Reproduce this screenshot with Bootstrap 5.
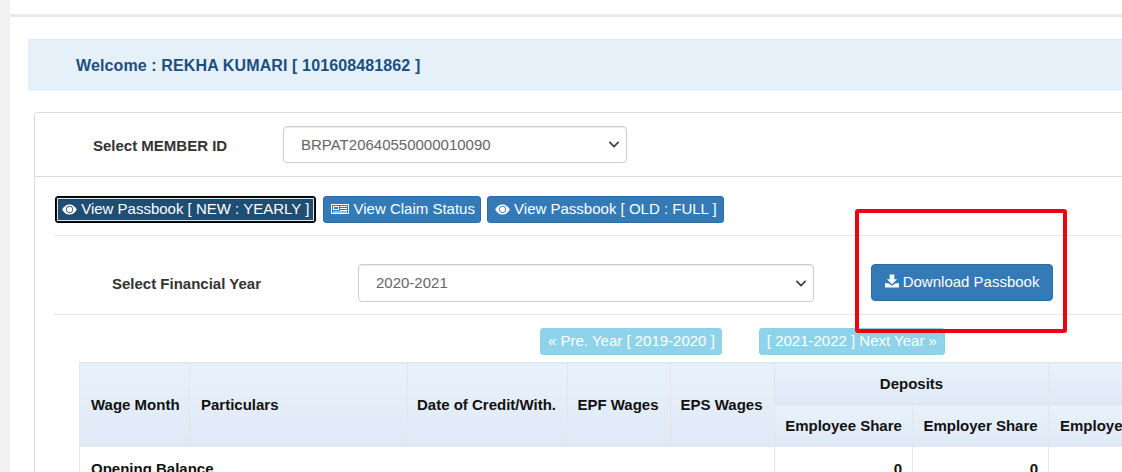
<!DOCTYPE html>
<html lang="en">
<head>
<meta charset="utf-8">
<title>Passbook</title>
<link rel="stylesheet" href="https://cdn.jsdelivr.net/npm/bootstrap@5.3.0/dist/css/bootstrap.min.css">
<style>
html,body{height:472px;overflow:hidden;background:#fff}
body{font-family:"Liberation Sans",Arial,sans-serif;font-size:15px;color:#333;position:relative}
.page-shell{margin-left:9px;width:1500px;border-left:1px solid #eee;min-height:472px}
.side-shade{position:absolute;left:0;top:0;width:9px;height:472px;background:#f1f1f1}
.top-rule{height:17px;border-bottom:3px solid #e9e9e9}
.welcome-band{margin:22px 0 0 18px;height:52px;background:#e5f0f8;border-top:1px solid #dfeaf2;padding-left:48px;font-size:16px;font-weight:700;color:#1c4f80;line-height:51px;letter-spacing:.12px}
.main-panel{margin:21px 0 0 24px;border:1px solid #ddd;border-radius:3px 0 0 0}
.member-row{height:64px;border-bottom:1px solid #ddd;padding-left:58px}
.member-label{width:190px;font-weight:700;color:#333;padding-top:4px}
.member-select,.year-select{height:37px;border:1px solid #ccc;border-radius:4px;color:#666;font-size:15px;font-family:"Liberation Sans",Arial,sans-serif;padding:1px 30px 0 17px;box-shadow:inset 0 1px 1px rgba(0,0,0,.075);background-image:url("data:image/svg+xml,%3csvg xmlns='http://www.w3.org/2000/svg' viewBox='0 0 16 16'%3e%3cpath fill='none' stroke='%23444' stroke-linecap='round' stroke-linejoin='round' stroke-width='2.6' d='m2 5 6 6 6-6'/%3e%3c/svg%3e");background-position:right 5px center;background-size:14px 11px}
.member-select{width:344px}
.year-select{width:456px;height:38px}
.action-row{padding:19px 0 12px 20px;gap:6px}
.pass-btn{height:27px;padding:0 6px 1px 7px;font-size:15px;background:#337ab7;border:1px solid #2e6da4;color:#fff;border-radius:3px;white-space:nowrap}
.pass-btn svg,.down-btn svg{vertical-align:-1px}
.pass-btn.is-current{background:#204d74;border-color:#000;box-shadow:inset 0 0 0 1px #111,inset 0 0 0 2px #dce6ee;padding:0 6px 1px 6px}
.pass-btn.claim-btn{margin-left:1px;padding-right:5px}
.rule-line{margin-left:19px;border-top:1px solid #e6e6e6}
.year-row{height:78px;padding:28px 0 0 77px;align-items:flex-start}
.year-label{width:246px;font-weight:700;color:#333;line-height:40px}
.down-btn{width:182px;height:37px;margin-left:57px;background:#337ab7;border:1px solid #2e6da4;color:#fff;border-radius:4px;font-size:15px;padding:0;white-space:nowrap}
.nav-years{padding:13px 0 7px 505px;gap:37px}
.year-btn{height:27px;padding:0 6px 1px 7px;font-size:15px;background:#8fd3ea;border:1px solid #8ed0e6;color:#fff;border-radius:3px;white-space:nowrap}
.year-btn.next-year{padding-right:7px}
.pass-grid{margin-left:44px;width:1300px;table-layout:fixed;border-collapse:collapse}
.pass-grid th{background:linear-gradient(#e7f2fb,#dfe9f7);border:1px solid #e2e6ea;font-weight:700;color:#111;font-size:15px;padding:2px 0 0;vertical-align:middle;height:42px;white-space:nowrap;overflow:hidden;text-align:center}
.pass-grid th.left-head{text-align:left;padding-left:11px}
.pass-grid th.mid-head{padding-right:2px}
.pass-grid td{border:1px solid #e2e6ea;height:42px;padding:11px 10px 0;font-weight:700;color:#111;vertical-align:top;text-align:right;white-space:nowrap;font-size:15px}
.pass-grid td.open-cell{text-align:left;border-right:0;padding-left:11px}
.c1{width:110px}.c2{width:218px}.c3{width:160px}.c4{width:103px}.c5{width:104px}.c6{width:138px}.c7{width:136px}.c8{width:331px}
.red-mark{position:absolute;left:855px;top:209px;width:212px;height:124px;border:4px solid #ee0010;border-radius:3px;pointer-events:none}
</style>
</head>
<body>
<div class="side-shade"></div>
<div class="page-shell">
  <div class="top-rule"></div>
  <div class="welcome-band">Welcome : REKHA KUMARI [ 101608481862 ]</div>
  <div class="main-panel">
    <div class="member-row d-flex align-items-center">
      <div class="member-label">Select MEMBER ID</div>
      <select class="member-select form-select"><option>BRPAT20640550000010090</option></select>
    </div>
    <div class="action-row d-flex">
      <button class="pass-btn is-current" type="button"><svg width="15" height="11" viewBox="0 0 16 12"><path fill="#fff" fill-rule="evenodd" d="M8 .5C4.500.5 1.600 2.700 0 6c1.600 3.300 4.500 5.500 8 5.500s6.400-2.200 8-5.500C14.400 2.700 11.500.5 8 .5zm0 1.700a3.800 3.800 0 1 1 0 7.600 3.800 3.800 0 0 1 0-7.600zm0 .9a2.900 2.900 0 1 0 0 5.800 2.900 2.900 0 0 0 0-5.800z"/></svg> View Passbook [ NEW : YEARLY ]</button>
      <button class="pass-btn claim-btn" type="button"><svg width="18" height="12" viewBox="0 0 18 12"><path fill="#fff" fill-rule="evenodd" d="M0 1h18v10H0zm1 1v8h16V2zm1 1h6v4H2zm1 1v2h4V4zm6-1h7v1H9zm0 2h7v1H9zm0 2h7v1H9zM2 8.500h14v1H2z"/></svg> View Claim Status</button>
      <button class="pass-btn" type="button"><svg width="15" height="11" viewBox="0 0 16 12"><path fill="#fff" fill-rule="evenodd" d="M8 .5C4.500.5 1.600 2.700 0 6c1.600 3.300 4.500 5.500 8 5.500s6.400-2.200 8-5.500C14.400 2.700 11.500.5 8 .5zm0 1.700a3.800 3.800 0 1 1 0 7.600 3.800 3.800 0 0 1 0-7.600zm0 .9a2.900 2.900 0 1 0 0 5.800 2.900 2.900 0 0 0 0-5.800z"/></svg> View Passbook [ OLD : FULL ]</button>
    </div>
    <div class="rule-line"></div>
    <div class="year-row d-flex">
      <div class="year-label">Select Financial Year</div>
      <select class="year-select form-select"><option>2020-2021</option></select>
      <button class="down-btn" type="button"><svg width="14" height="14" viewBox="0 0 15 14"><path fill="#fff" d="M5 0h5v5h3L7.500 10.500 2 5h3zM0 9.500h3.500l4 2.500 4-2.500H15V14H0z"/></svg> Download Passbook</button>
    </div>
    <div class="rule-line"></div>
    <div class="nav-years d-flex">
      <button class="year-btn" type="button">« Pre. Year [ 2019-2020 ]</button>
      <button class="year-btn next-year" type="button">[ 2021-2022 ] Next Year »</button>
    </div>
    <table class="pass-grid">
      <colgroup><col class="c1"><col class="c2"><col class="c3"><col class="c4"><col class="c5"><col class="c6"><col class="c7"><col class="c8"></colgroup>
      <tr>
        <th rowspan="2" class="left-head">Wage Month</th>
        <th rowspan="2" class="left-head">Particulars</th>
        <th rowspan="2" class="mid-head">Date of Credit/With.</th>
        <th rowspan="2" class="mid-head">EPF Wages</th>
        <th rowspan="2" class="mid-head">EPS Wages</th>
        <th colspan="2">Deposits</th>
        <th></th>
      </tr>
      <tr>
        <th>Employee Share</th>
        <th>Employer Share</th>
        <th class="left-head">Employee Share</th>
      </tr>
      <tr>
        <td colspan="5" class="open-cell">Opening Balance</td>
        <td>0</td>
        <td>0</td>
        <td></td>
      </tr>
    </table>
  </div>
</div>
<div class="red-mark"></div>
<script src="https://cdn.jsdelivr.net/npm/bootstrap@5.3.0/dist/js/bootstrap.bundle.min.js"></script>
</body>
</html>
